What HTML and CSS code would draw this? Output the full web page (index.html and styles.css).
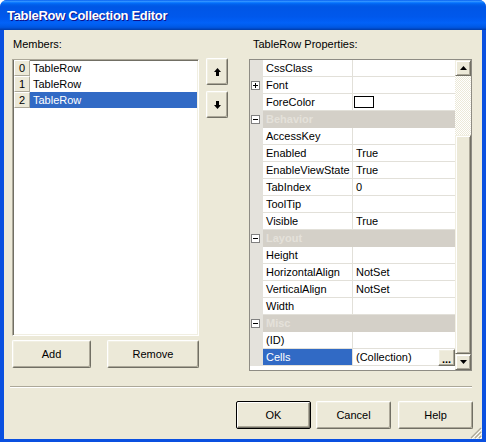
FILE: index.html
```html
<!DOCTYPE html>
<html lang="en">
<head>
  <meta charset="UTF-8">
  <title>TableRow Collection Editor</title>
  <link rel="stylesheet" href="styles.css">
</head>
<body>
  <div class="window">
    <div class="titlebar"><span class="title">TableRow Collection Editor</span></div>
    <div class="client">
      <div class="main">
        <div class="members">
          <div class="label">Members:</div>
          <div class="listbox">
            <div class="item"><span class="idx">0</span><span class="text">TableRow</span></div>
            <div class="item"><span class="idx">1</span><span class="text">TableRow</span></div>
            <div class="item selected"><span class="idx">2</span><span class="text">TableRow</span></div>
          </div>
          <div class="list-buttons">
            <button class="btn add">Add</button>
            <button class="btn remove">Remove</button>
          </div>
        </div>

        <div class="arrows">
          <button class="btn arrow">
            <svg width="7" height="8" viewBox="0 0 7 8"><polygon points="3.5,0 7,4 5,4 5,8 2,8 2,4 0,4" fill="#000"/></svg>
          </button>
          <button class="btn arrow">
            <svg width="7" height="8" viewBox="0 0 7 8"><polygon points="3.5,8 7,4 5,4 5,0 2,0 2,4 0,4" fill="#000"/></svg>
          </button>
        </div>

        <div class="props">
          <div class="label">TableRow Properties:</div>
          <div class="grid">
            <div class="rows">
              <div class="prop"><span class="gutter"></span><span class="name">CssClass</span><span class="value"></span></div>
              <div class="prop"><span class="gutter"><svg class="box" width="9" height="9" viewBox="0 0 9 9"><rect x="0.5" y="0.5" width="8" height="8" fill="#fff" stroke="#808080"/><path d="M2 4.5h5M4.5 2v5" stroke="#000"/></svg></span><span class="name">Font</span><span class="value"></span></div>
              <div class="prop"><span class="gutter"></span><span class="name">ForeColor</span><span class="value"><span class="swatch"></span></span></div>
              <div class="prop cat"><span class="gutter"><svg class="box" width="9" height="9" viewBox="0 0 9 9"><rect x="0.5" y="0.5" width="8" height="8" fill="#fff" stroke="#808080"/><path d="M2 4.5h5" stroke="#000"/></svg></span><span class="catname">Behavior</span></div>
              <div class="prop"><span class="gutter"></span><span class="name">AccessKey</span><span class="value"></span></div>
              <div class="prop"><span class="gutter"></span><span class="name">Enabled</span><span class="value">True</span></div>
              <div class="prop"><span class="gutter"></span><span class="name">EnableViewState</span><span class="value">True</span></div>
              <div class="prop"><span class="gutter"></span><span class="name">TabIndex</span><span class="value">0</span></div>
              <div class="prop"><span class="gutter"></span><span class="name">ToolTip</span><span class="value"></span></div>
              <div class="prop"><span class="gutter"></span><span class="name">Visible</span><span class="value">True</span></div>
              <div class="prop cat"><span class="gutter"><svg class="box" width="9" height="9" viewBox="0 0 9 9"><rect x="0.5" y="0.5" width="8" height="8" fill="#fff" stroke="#808080"/><path d="M2 4.5h5" stroke="#000"/></svg></span><span class="catname">Layout</span></div>
              <div class="prop"><span class="gutter"></span><span class="name">Height</span><span class="value"></span></div>
              <div class="prop"><span class="gutter"></span><span class="name">HorizontalAlign</span><span class="value">NotSet</span></div>
              <div class="prop"><span class="gutter"></span><span class="name">VerticalAlign</span><span class="value">NotSet</span></div>
              <div class="prop"><span class="gutter"></span><span class="name">Width</span><span class="value"></span></div>
              <div class="prop cat"><span class="gutter"><svg class="box" width="9" height="9" viewBox="0 0 9 9"><rect x="0.5" y="0.5" width="8" height="8" fill="#fff" stroke="#808080"/><path d="M2 4.5h5" stroke="#000"/></svg></span><span class="catname">Misc</span></div>
              <div class="prop"><span class="gutter"></span><span class="name">(ID)</span><span class="value"></span></div>
              <div class="prop selected"><span class="gutter"></span><span class="name">Cells</span><span class="value">(Collection)<button class="btn ellipsis">...</button></span></div>
            </div>
            <div class="scrollbar">
              <div class="sb-btn">
                <svg width="7" height="4" viewBox="0 0 7 4"><polygon points="3.5,0 7,4 0,4" fill="#000"/></svg>
              </div>
              <div class="sb-track"><div class="thumb"></div></div>
              <div class="sb-btn">
                <svg width="7" height="4" viewBox="0 0 7 4"><polygon points="0,0 7,0 3.5,4" fill="#000"/></svg>
              </div>
            </div>
          </div>
        </div>
      </div>

      <div class="separator"></div>

      <div class="footer">
        <button class="btn default">OK</button>
        <button class="btn">Cancel</button>
        <button class="btn help">Help</button>
      </div>

      <svg class="grip" width="12" height="12" viewBox="0 0 12 12">
        <path d="M11 1L1 11M11 5L5 11M11 9L9 11" stroke="#aca899" stroke-width="1.2"/>
        <path d="M12 2L2 12M12 6L6 12M12 10L10 12" stroke="#fff" stroke-width="1"/>
      </svg>
    </div>
  </div>
</body>
</html>
```

FILE: styles.css
```css
body {
  margin: 0;
  font-family: "Liberation Sans", Arial, sans-serif;
  font-size: 11px;
  color: #000;
  background: #fff;
}
.window {
  width: 486px;
  height: 442px;
  display: flex;
  flex-direction: column;
  background: #0a50e0;
  border-radius: 7px 7px 0 0;
  overflow: hidden;
}
.titlebar {
  height: 30px;
  flex: none;
  display: flex;
  align-items: center;
  padding-left: 7px;
  background: linear-gradient(to bottom, #0058ee 0%, #3593ff 4%, #288eff 6%, #127dff 8%, #036ffc 10%, #0262ee 14%, #0058e6 20%, #0056e6 24%, #0058ec 56%, #005cf2 66%, #0262f8 76%, #005ceb 86%, #0054dc 92%, #0048c4 96%, #003ca8 100%);
}
.title {
  color: #fff;
  font-weight: bold;
  font-size: 13px;
  letter-spacing: -0.3px;
  text-shadow: 1px 1px #0f1089;
  padding-top: 1px;
}
.client {
  flex: 1;
  margin: 0 4px 3px 4px;
  padding: 8px 10px 0 8px;
  background: #ece9d8;
  position: relative;
  display: flex;
  flex-direction: column;
}
.main {
  display: flex;
}
.label {
  height: 13px;
  line-height: 13px;
  margin-bottom: 8px;
  padding-left: 1px;
  white-space: nowrap;
}
.members {
  width: 187px;
  flex: none;
}
.listbox {
  height: 277px;
  box-sizing: border-box;
  background: #fff;
  border: 1px solid;
  border-color: #aca899 #fff #fff #aca899;
  box-shadow: inset 1px 1px #716f64, inset -1px -1px #f1efe2;
  padding: 0 1px 0 1px;
}
.item {
  display: flex;
  height: 16px;
  line-height: 16px;
}
.idx {
  width: 16px;
  box-sizing: border-box;
  text-align: center;
  line-height: 14px;
  background: #ece9d8;
  border: 1px solid;
  border-color: #fff #aca899 #aca899 #fff;
}
.text {
  flex: 1;
  padding-left: 3px;
}
.item.selected .text {
  background: #316ac5;
  color: #fff;
}
.btn {
  font-family: inherit;
  font-size: 11px;
  color: #000;
  background: #ece9d8;
  border: 1px solid;
  border-color: #fff #716f64 #716f64 #fff;
  box-shadow: inset -1px -1px #aca899, inset 1px 1px #f1efe2;
  border-radius: 2px;
  padding: 0;
  cursor: pointer;
}
.btn.default {
  border-color: #000;
  box-shadow: inset 1px 1px #fff, inset -1px -1px #716f64, inset -2px -2px #aca899;
}
.list-buttons {
  display: flex;
  justify-content: space-between;
  margin-top: 4px;
}
.list-buttons .btn {
  height: 28px;
}
.add {
  width: 79px;
}
.remove {
  width: 92px;
}
.arrows {
  width: 22px;
  flex: none;
  margin-left: 7px;
  padding-top: 20px;
  display: flex;
  flex-direction: column;
  gap: 6px;
}
.arrow {
  height: 27px;
  display: flex;
  align-items: center;
  justify-content: center;
}
.props {
  width: 223px;
  flex: none;
  margin-left: 21px;
}
.props .label {
  padding-left: 4px;
}
.grid {
  height: 312px;
  box-sizing: border-box;
  border: 1px solid #8e8c84;
  background: #fff;
  display: flex;
}
.rows {
  flex: 1;
  display: flex;
  flex-direction: column;
}
.prop {
  display: flex;
  height: 17px;
  line-height: 16px;
  white-space: nowrap;
}
.gutter {
  width: 13px;
  flex: none;
  background: #e4e2dc;
  display: flex;
  align-items: center;
  padding-left: 1px;
  box-sizing: border-box;
}
.box {
  display: block;
}
.name {
  width: 89px;
  flex: none;
  box-sizing: border-box;
  padding-left: 3px;
  border-bottom: 1px solid #e2e0d9;
  overflow: hidden;
}
.value {
  flex: 1;
  display: flex;
  align-items: center;
  padding-left: 3px;
  border-left: 1px solid #e2e0d9;
  border-bottom: 1px solid #e2e0d9;
}
.catname {
  flex: 1;
  padding-left: 3px;
  background: #d4d0c8;
  color: #e4e1da;
  font-weight: bold;
}
.swatch {
  display: block;
  width: 18px;
  height: 10px;
  border: 1px solid #000;
  background: #fff;
  margin-left: -2px;
}
.prop.selected .name {
  background: #316ac5;
  color: #fff;
}
.ellipsis {
  margin-left: auto;
  width: 17px;
  height: 17px;
  font-weight: bold;
  line-height: 18px;
  border-radius: 0;
  overflow: hidden;
}
.scrollbar {
  width: 16px;
  flex: none;
  display: flex;
  flex-direction: column;
  background-color: #fff;
  background-image: conic-gradient(#ece9d8 25%, #fff 0 50%, #ece9d8 0 75%, #fff 0);
  background-size: 2px 2px;
}
.sb-btn {
  height: 16px;
  box-sizing: border-box;
  background: #ece9d8;
  border: 1px solid;
  border-color: #f1efe2 #716f64 #716f64 #f1efe2;
  box-shadow: inset 1px 1px #fff, inset -1px -1px #aca899;
  display: flex;
  align-items: center;
  justify-content: center;
}
.sb-track {
  flex: 1;
  display: flex;
  flex-direction: column;
  justify-content: flex-end;
}
.thumb {
  height: 219px;
  box-sizing: border-box;
  background: #ece9d8;
  border: 1px solid;
  border-color: #f1efe2 #716f64 #716f64 #f1efe2;
  box-shadow: inset 1px 1px #fff, inset -1px -1px #aca899;
}
.separator {
  margin: 15px 0 0 -2px;
  border-top: 1px solid #aca899;
  border-bottom: 1px solid #fff;
}
.footer {
  display: flex;
  justify-content: flex-end;
  gap: 5px;
  margin-top: 13px;
  margin-right: -1px;
}
.footer .btn {
  width: 75px;
  height: 28px;
}
.footer .help {
  margin-left: 2px;
}
.grip {
  position: absolute;
  right: 0;
  bottom: 0;
}
```
